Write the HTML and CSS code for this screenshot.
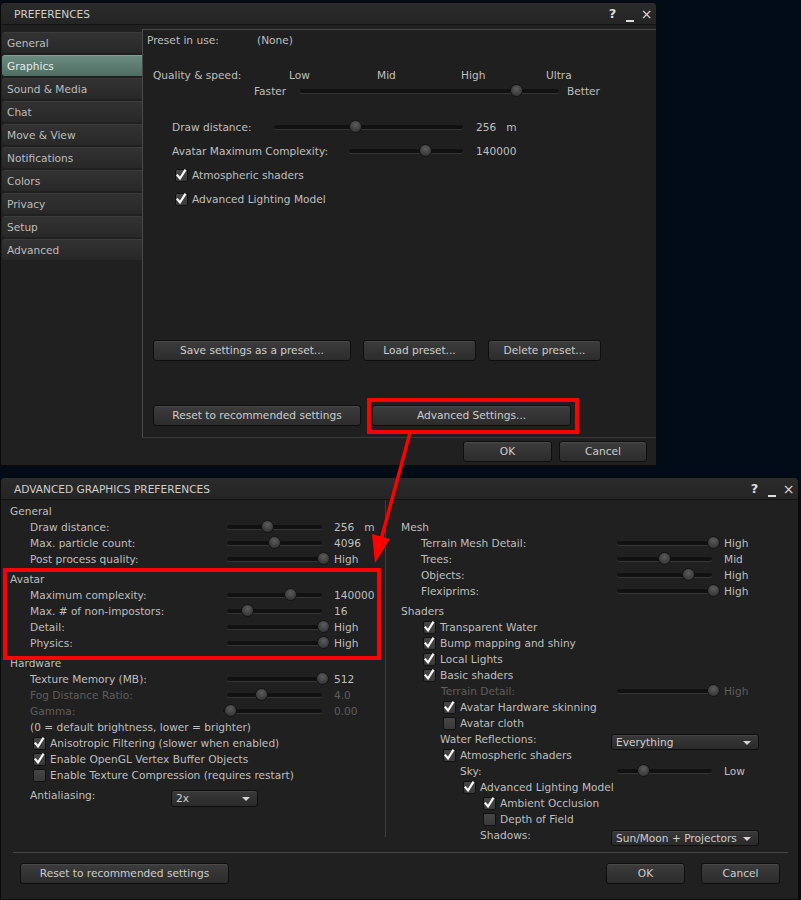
FILE: index.html
```html
<!DOCTYPE html>
<html lang="en">
<head>
<meta charset="utf-8">
<title>Preferences</title>
<link rel="stylesheet" href="styles.css">
</head>
<body>
<section class="dlg prefs">
  <header class="titlebar">
    <span class="title">PREFERENCES</span>
    <span class="tb-icons"><span class="ic ic-help">?</span><span class="ic ic-min"><i></i></span><span class="ic ic-close">×</span></span>
  </header>
  <div class="prefs-body">
    <ul class="tabs">
      <li>General</li>
      <li class="active">Graphics</li>
      <li>Sound &amp; Media</li>
      <li>Chat</li>
      <li>Move &amp; View</li>
      <li>Notifications</li>
      <li>Colors</li>
      <li>Privacy</li>
      <li>Setup</li>
      <li>Advanced</li>
    </ul>
    <div class="panel">
      <div class="preset-row"><span class="preset-label">Preset in use:</span><span>(None)</span></div>
      <div class="q-row1"><span class="q-label">Quality &amp; speed:</span><span class="q-low">Low</span><span class="q-mid">Mid</span><span class="q-high">High</span><span>Ultra</span></div>
      <div class="q-row2"><span class="q-faster">Faster</span><div class="slider w259"><span class="thumb" style="left:216px"></span></div><span class="q-better">Better</span></div>
      <div class="srow mt20"><span class="lw102">Draw distance:</span><div class="slider w189"><span class="thumb" style="left:81px"></span></div><span class="sval">256   m</span></div>
      <div class="srow mt8"><span class="lw177">Avatar Maximum Complexity:</span><div class="slider w114"><span class="thumb" style="left:76px"></span></div><span class="sval">140000</span></div>
      <div class="cb top-cb mt8"><span class="box"><svg viewBox="0 0 13 13"><path d="M2.5 6.5 L5 9.5 L10 1.5"/></svg></span><span>Atmospheric shaders</span></div>
      <div class="cb top-cb mt8"><span class="box"><svg viewBox="0 0 13 13"><path d="M2.5 6.5 L5 9.5 L10 1.5"/></svg></span><span>Advanced Lighting Model</span></div>
      <div class="btn-row b1"><button class="btn w198">Save settings as a preset...</button><button class="btn w113">Load preset...</button><button class="btn w113">Delete preset...</button></div>
      <div class="btn-row b2"><button class="btn w208">Reset to recommended settings</button><button class="btn w199">Advanced Settings...</button></div>
    </div>
  </div>
  <footer class="prefs-foot"><button class="btn w89">OK</button><button class="btn w88">Cancel</button></footer>
</section>

<section class="dlg adv">
  <header class="titlebar">
    <span class="title">ADVANCED GRAPHICS PREFERENCES</span>
    <span class="tb-icons"><span class="ic ic-help">?</span><span class="ic ic-min"><i></i></span><span class="ic ic-close">×</span></span>
  </header>
  <div class="adv-body">
    <div class="col col-left">
      <div class="hdr">General</div>
      <div class="row"><span class="lab">Draw distance:</span><div class="slider"><span class="thumb" style="left:40px"></span></div><span class="val">256   m</span></div>
      <div class="row"><span class="lab">Max. particle count:</span><div class="slider"><span class="thumb" style="left:47px"></span></div><span class="val">4096</span></div>
      <div class="row"><span class="lab">Post process quality:</span><div class="slider"><span class="thumb" style="left:96px"></span></div><span class="val">High</span></div>
      <div class="hdr gap">Avatar</div>
      <div class="row"><span class="lab">Maximum complexity:</span><div class="slider"><span class="thumb" style="left:63px"></span></div><span class="val">140000</span></div>
      <div class="row"><span class="lab">Max. # of non-impostors:</span><div class="slider"><span class="thumb" style="left:20px"></span></div><span class="val">16</span></div>
      <div class="row"><span class="lab">Detail:</span><div class="slider"><span class="thumb" style="left:96px"></span></div><span class="val">High</span></div>
      <div class="row"><span class="lab">Physics:</span><div class="slider"><span class="thumb" style="left:96px"></span></div><span class="val">High</span></div>
      <div class="hdr gap">Hardware</div>
      <div class="row"><span class="lab">Texture Memory (MB):</span><div class="slider"><span class="thumb" style="left:95px"></span></div><span class="val">512</span></div>
      <div class="row dis"><span class="lab">Fog Distance Ratio:</span><div class="slider"><span class="thumb" style="left:34px"></span></div><span class="val">4.0</span></div>
      <div class="row dis"><span class="lab">Gamma:</span><div class="slider gamma"><span class="thumb" style="left:3px"></span></div><span class="val">0.00</span></div>
      <div class="note">(0 = default brightness, lower = brighter)</div>
      <div class="cb"><span class="box"><svg viewBox="0 0 13 13"><path d="M2.5 6.5 L5 9.5 L10 1.5"/></svg></span><span>Anisotropic Filtering (slower when enabled)</span></div>
      <div class="cb"><span class="box"><svg viewBox="0 0 13 13"><path d="M2.5 6.5 L5 9.5 L10 1.5"/></svg></span><span>Enable OpenGL Vertex Buffer Objects</span></div>
      <div class="cb"><span class="box"></span><span>Enable Texture Compression (requires restart)</span></div>
      <div class="dd-row aa"><span class="lab">Antialiasing:</span><div class="dropdown tall">2x</div></div>
    </div>
    <div class="col col-right">
      <div class="hdr">Mesh</div>
      <div class="row"><span class="lab">Terrain Mesh Detail:</span><div class="slider"><span class="thumb" style="left:96px"></span></div><span class="val">High</span></div>
      <div class="row"><span class="lab">Trees:</span><div class="slider"><span class="thumb" style="left:47px"></span></div><span class="val">Mid</span></div>
      <div class="row"><span class="lab">Objects:</span><div class="slider"><span class="thumb" style="left:71px"></span></div><span class="val">High</span></div>
      <div class="row"><span class="lab">Flexiprims:</span><div class="slider"><span class="thumb" style="left:96px"></span></div><span class="val">High</span></div>
      <div class="hdr gap">Shaders</div>
      <div class="cb c1"><span class="box"><svg viewBox="0 0 13 13"><path d="M2.5 6.5 L5 9.5 L10 1.5"/></svg></span><span>Transparent Water</span></div>
      <div class="cb c1"><span class="box"><svg viewBox="0 0 13 13"><path d="M2.5 6.5 L5 9.5 L10 1.5"/></svg></span><span>Bump mapping and shiny</span></div>
      <div class="cb c1"><span class="box"><svg viewBox="0 0 13 13"><path d="M2.5 6.5 L5 9.5 L10 1.5"/></svg></span><span>Local Lights</span></div>
      <div class="cb c1"><span class="box"><svg viewBox="0 0 13 13"><path d="M2.5 6.5 L5 9.5 L10 1.5"/></svg></span><span>Basic shaders</span></div>
      <div class="row dis"><span class="lab p55">Terrain Detail:</span><div class="slider"><span class="thumb" style="left:96px"></span></div><span class="val">High</span></div>
      <div class="cb c2"><span class="box"><svg viewBox="0 0 13 13"><path d="M2.5 6.5 L5 9.5 L10 1.5"/></svg></span><span>Avatar Hardware skinning</span></div>
      <div class="cb c2"><span class="box"></span><span>Avatar cloth</span></div>
      <div class="dd-row"><span class="lab p54">Water Reflections:</span><div class="dropdown">Everything</div></div>
      <div class="cb c2"><span class="box"><svg viewBox="0 0 13 13"><path d="M2.5 6.5 L5 9.5 L10 1.5"/></svg></span><span>Atmospheric shaders</span></div>
      <div class="row"><span class="lab p74">Sky:</span><div class="slider"><span class="thumb" style="left:26px"></span></div><span class="val">Low</span></div>
      <div class="cb c3"><span class="box"><svg viewBox="0 0 13 13"><path d="M2.5 6.5 L5 9.5 L10 1.5"/></svg></span><span>Advanced Lighting Model</span></div>
      <div class="cb c4"><span class="box"><svg viewBox="0 0 13 13"><path d="M2.5 6.5 L5 9.5 L10 1.5"/></svg></span><span>Ambient Occlusion</span></div>
      <div class="cb c4"><span class="box"></span><span>Depth of Field</span></div>
      <div class="dd-row"><span class="lab p94">Shadows:</span><div class="dropdown">Sun/Moon + Projectors</div></div>
    </div>
  </div>
  <footer class="adv-foot"><button class="btn w209">Reset to recommended settings</button><span class="spacer"></span><button class="btn w79">OK</button><button class="btn w79">Cancel</button></footer>
</section>

<div class="callout callout-1"></div>
<div class="callout callout-2"></div>
<svg class="arrow" viewBox="0 0 801 900"><line x1="410" y1="433" x2="381" y2="540"/><polygon points="375,563 372,534 390,539"/></svg>
</body>
</html>
```

FILE: styles.css
```css
* { box-sizing: border-box; margin: 0; padding: 0; }
html, body { width: 801px; height: 900px; }
body {
  background: #020c16;
  font-family: "DejaVu Sans", "Liberation Sans", sans-serif;
  font-size: 10.6px;
  line-height: 16px;
  color: #bfbfbf;
  position: relative;
  overflow: hidden;
}
ul { list-style: none; }
button { font: inherit; }

.dlg {
  background: #202020;
  border: 1px solid #0a0a0a;
  border-radius: 5px 5px 0 0;
  display: flex;
  flex-direction: column;
}
.prefs { width: 657px; height: 464px; margin-top: 2px; }
.adv { width: 799px; height: 423px; margin-top: 11px; }

.titlebar {
  flex: none;
  height: 22px;
  display: flex;
  align-items: center;
  justify-content: space-between;
  padding: 0 1px 0 13px;
  background: linear-gradient(#2b2b2b, #242424);
  border-bottom: 1px solid #131313;
  border-radius: 4px 4px 0 0;
}
.title { color: #cfcfcf; }
.tb-icons { display: flex; align-items: center; }
.ic { width: 17px; text-align: center; color: #dcdcdc; line-height: 16px; }
.ic-help { font-weight: bold; font-size: 13px; }
.ic-min i { display: inline-block; width: 8px; height: 2px; background: #dcdcdc; vertical-align: -4px; }
.ic-close { font-size: 14px; }

/* Preferences */
.prefs-body { display: flex; height: 413px; flex: none; }
.tabs { width: 140px; margin-left: 1px; padding-top: 7px; flex: none; }
.tabs li {
  height: 21px;
  margin-bottom: 2px;
  padding-left: 5px;
  line-height: 20px;
  background: linear-gradient(#323232, #282828);
  border-top: 1px solid #3b3b3b;
  border-radius: 3px 0 0 3px;
  color: #bdbdbd;
}
.tabs li.active {
  background: linear-gradient(#6a8b7f, #4f6e63);
  border-top-color: #7d9e92;
  color: #e8e8e8;
}
.panel {
  flex: 1;
  height: 409px;
  margin-top: 4px;
  background: #1f1f1f;
  border-top: 1px solid #4a4a4a;
  border-left: 1px solid #4a4a4a;
  border-bottom: 1px solid #3a3a3a;
}
.preset-row { display: flex; margin-top: 2px; padding-left: 4px; height: 16px; }
.preset-label { width: 110px; }
.q-row1 { display: flex; margin-top: 19px; padding-left: 10px; height: 16px; }
.q-label { width: 136px; }
.q-low { width: 88px; }
.q-mid { width: 84px; }
.q-high { width: 85px; }
.q-row2 { display: flex; align-items: center; padding-left: 111px; height: 16px; }
.q-faster { width: 46px; }
.q-better { margin-left: 8px; }
.srow { display: flex; align-items: center; height: 16px; padding-left: 29px; }
.lw102 { width: 102px; }
.lw177 { width: 177px; }
.sval { margin-left: 13px; white-space: pre; }
.mt20 { margin-top: 20px; }
.mt8 { margin-top: 8px; }
.top-cb { padding-left: 32px; }
.btn-row { display: flex; gap: 12px; padding-left: 10px; }
.b1 { margin-top: 133px; }
.b2 { margin-top: 44px; gap: 11px; }
.prefs-foot { display: flex; justify-content: flex-end; gap: 7px; padding-right: 9px; margin-top: 3px; }

/* Buttons */
.btn {
  height: 21px;
  flex: none;
  border: 1px solid #0e0e0e;
  border-radius: 3px;
  background: linear-gradient(#3c3c3c, #2c2c2c);
  box-shadow: inset 0 1px 0 rgba(255,255,255,0.07);
  color: #cdcdcd;
  text-align: center;
  line-height: 19px;
}
.w198 { width: 198px; }
.w113 { width: 113px; }
.w208 { width: 208px; }
.w199 { width: 199px; }
.w89 { width: 89px; }
.w88 { width: 88px; }
.w209 { width: 209px; }
.w79 { width: 79px; }

/* Sliders */
.slider { position: relative; height: 16px; flex: none; width: 95px; }
.slider::before {
  content: "";
  position: absolute;
  left: 0; right: 0; top: 6px;
  height: 4px;
  border-radius: 2px;
  background: #111111;
  box-shadow: 0 1px 0 #353535;
}
.slider.gamma::before { left: -4px; }
.w259 { width: 259px; }
.w189 { width: 189px; }
.w114 { width: 114px; }
.thumb {
  position: absolute;
  top: 1px;
  width: 13px;
  height: 13px;
  margin-left: -6.5px;
  border-radius: 50%;
  background: radial-gradient(circle at 50% 35%, #5c5c5c, #363636 75%);
  border: 1px solid #141414;
}

/* Checkboxes */
.cb { display: flex; align-items: center; height: 16px; }
.box {
  position: relative;
  width: 13px;
  height: 13px;
  margin-right: 4px;
  flex: none;
  background: linear-gradient(#464646, #393939);
  border: 1px solid #111111;
  border-radius: 2px;
}
.box svg { position: absolute; left: -1px; top: -1px; width: 13px; height: 13px; overflow: visible; }
.box svg path { fill: none; stroke: #f6f6f6; stroke-width: 2.2; stroke-linecap: square; stroke-linejoin: miter; }

/* Advanced dialog */
.adv-body { display: flex; height: 352px; flex: none; }
.col-left { width: 385px; height: 337px; border-right: 1px solid #3c3c3c; padding-top: 3px; flex: none; }
.col-right { flex: 1; padding-top: 19px; }
.hdr { height: 16px; padding-left: 9px; }
.col-right .hdr { padding-left: 15px; }
.hdr.gap { margin-top: 4px; }
.row { display: grid; height: 16px; align-items: center; }
.col-left .row { grid-template-columns: 226px 95px auto; }
.col-right .row { grid-template-columns: 231px 95px auto; }
.lab { padding-left: 29px; white-space: nowrap; }
.col-right .lab { padding-left: 35px; }
.col-right .lab.p55 { padding-left: 55px; }
.col-right .lab.p54 { padding-left: 54px; }
.col-right .lab.p74 { padding-left: 74px; }
.col-right .lab.p94 { padding-left: 94px; }
.val { margin-left: 12px; white-space: pre; }
.dis { color: #5e5e5e; }
.note { padding-left: 29px; height: 16px; }
.col-left .cb { padding-left: 32px; }
.cb.c1 { padding-left: 37px; }
.cb.c2 { padding-left: 57px; }
.cb.c3 { padding-left: 77px; }
.cb.c4 { padding-left: 97px; }
.dd-row { display: grid; height: 16px; }
.col-right .dd-row { grid-template-columns: 225px 148px; }
.col-left .dd-row { grid-template-columns: 170px 87px; margin-top: 4px; }
.dropdown {
  position: relative;
  height: 16px;
  margin-top: 3px;
  padding-left: 4px;
  border: 1px solid #0e0e0e;
  border-radius: 3px;
  background: linear-gradient(#393939, #2a2a2a);
  box-shadow: inset 0 1px 0 rgba(255,255,255,0.06);
  color: #cfcfcf;
  line-height: 14px;
  white-space: nowrap;
}
.dropdown.tall { height: 17px; line-height: 15px; }
.dropdown::after {
  content: "";
  position: absolute;
  right: 7px;
  top: 6px;
  border-left: 4px solid transparent;
  border-right: 4px solid transparent;
  border-top: 4px solid #d4d4d4;
}
.adv-foot {
  display: flex;
  gap: 16px;
  margin: 0 10px 0 12px;
  padding: 10px 8px 0 7px;
  border-top: 1px solid #454545;
}
.spacer { flex: 1; }

/* Annotations */
.callout { position: absolute; border: 4px solid #ff0000; pointer-events: none; }
.callout-1 { left: 367px; top: 398px; width: 212px; height: 36px; }
.callout-2 { left: 3px; top: 568px; width: 378px; height: 92px; }
.arrow { position: absolute; left: 0; top: 0; width: 801px; height: 900px; pointer-events: none; }
.arrow line { stroke: #ff0000; stroke-width: 3.5; }
.arrow polygon { fill: #ff0000; }
```
